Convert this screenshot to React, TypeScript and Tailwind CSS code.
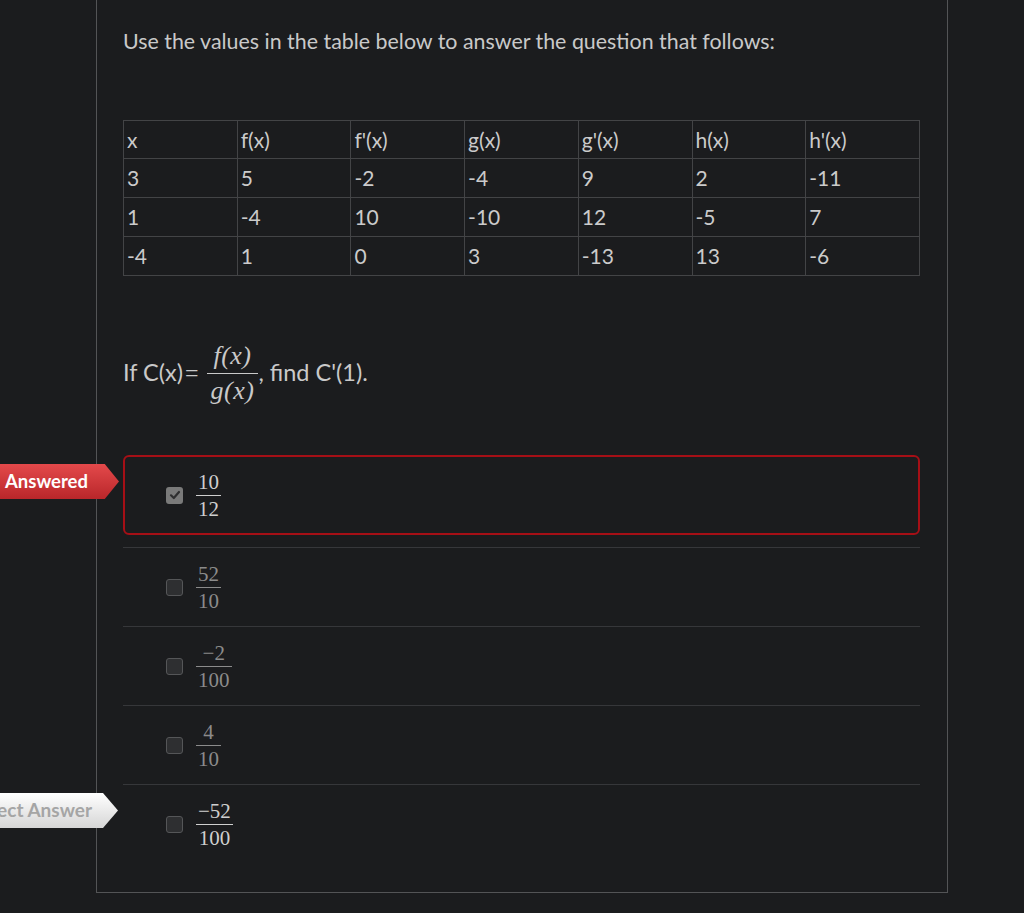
import React from "react"

const headers = ["x", "f(x)", "f'(x)", "g(x)", "g'(x)", "h(x)", "h'(x)"]
const rows = [
  ["3", "5", "-2", "-4", "9", "2", "-11"],
  ["1", "-4", "10", "-10", "12", "-5", "7"],
  ["-4", "1", "0", "3", "-13", "13", "-6"],
]

const options = [
  { num: "10", den: "12", checked: true, light: true },
  { num: "52", den: "10", checked: false, light: false },
  { num: "\u22122", den: "100", checked: false, light: false },
  { num: "4", den: "10", checked: false, light: false },
  { num: "\u221252", den: "100", checked: false, light: true },
]

function Frac({ num, den, className, lh = "leading-[26px] px-[2px]" }: { num: React.ReactNode; den: React.ReactNode; className?: string; lh?: string }) {
  return (
    <span className={"inline-flex flex-col items-center " + (className ?? "")}>
      <span className={lh}>{num}</span>
      <span className="w-full h-px bg-current" />
      <span className={lh}>{den}</span>
    </span>
  )
}

function Checkbox({ checked }: { checked: boolean }) {
  if (checked) {
    return (
      <span className="w-[17px] h-[17px] rounded-[3px] bg-[#7a7a7a] flex items-center justify-center">
        <svg width="12" height="12" viewBox="0 0 12 12">
          <path d="M2 6.3 L4.8 9 L10 3" fill="none" stroke="#2f2f30" strokeWidth="2.2" strokeLinecap="round" strokeLinejoin="round" />
        </svg>
      </span>
    )
  }
  return <span className="w-[17px] h-[17px] rounded-[3px] bg-[#2e2f31] border border-[#555658]" />
}

export default function App() {
  return (
    <div className="w-full h-[913px] relative bg-[#1b1c1e] overflow-hidden font-['Lato','Liberation_Sans',sans-serif] text-[#c9c9c9]">
      <div className="ml-[96px] w-[852px] h-[893px] border-x border-b border-[#535456] pl-[26px] pr-[27px] pt-[26px]">
        <p className="text-[21.4px] leading-[30px]">Use the values in the table below to answer the question that follows:</p>

        <table className="mt-[64px] w-[797px] table-fixed border-collapse text-[21px] text-[#cbcbcb]">
          <tbody>
            <tr className="h-[38px]">
              {headers.map((h) => (
                <td key={h} className="border border-[#434446] px-[3px] align-middle leading-[24px]">{h}</td>
              ))}
            </tr>
            {rows.map((r, i) => (
              <tr key={i} className="h-[39px]">
                {r.map((c, j) => (
                  <td key={j} className="border border-[#434446] px-[3px] align-middle leading-[24px]">{c}</td>
                ))}
              </tr>
            ))}
          </tbody>
        </table>

        <div className="mt-[62px] flex items-center h-[70px] text-[23.5px]">
          <span>If C(x)</span>
          <span className="ml-[2px] font-['Liberation_Serif',serif] text-[24px]">=</span>
          <Frac
            className="ml-[8px] font-['Liberation_Serif',serif] italic text-[26px]"
            lh="leading-[34px] px-[4px] tracking-[0.5px]"
            num={<>f(x)</>}
            den={<>g(x)</>}
          />
          <span>, find C'(1).</span>
        </div>

        <div className="mt-[47px]">
          {options.map((o, i) => (
            <div
              key={i}
              className={
                i === 0
                  ? "relative h-[80px] mb-[12px] rounded-[6px] border-2 border-[#a60f16] flex items-center pl-[41px]"
                  : "relative h-[79px] border-t border-[#36373a] flex items-center pl-[43px]"
              }
            >
              {i === 0 && (
                <div className="absolute left-[-125px] top-[7px] w-[119px] h-[35px] [clip-path:polygon(0_0,88%_0,100%_50%,88%_100%,0_100%)] bg-gradient-to-b from-[#e4494b] to-[#b9262a] flex items-center pl-[5px] text-white text-[18.5px] font-bold">
                  Answered
                </div>
              )}
              {i === 4 && (
                <div className="absolute left-[-155px] top-[8px] w-[150px] h-[35px] [clip-path:polygon(0_0,90%_0,100%_50%,90%_100%,0_100%)] bg-gradient-to-b from-[#ffffff] to-[#d6d6d6] flex items-center justify-end pr-[26px] text-[#a5a5a5] text-[19px] font-bold whitespace-nowrap">
                  Correct Answer
                </div>
              )}
              <Checkbox checked={o.checked} />
              <Frac
                className={
                  "ml-[13px] font-['Liberation_Serif',serif] text-[21px] " +
                  (o.light ? "text-[#cfcfcf]" : "text-[#8b8b8b]")
                }
                num={o.num}
                den={o.den}
              />
            </div>
          ))}
        </div>
      </div>
    </div>
  )
}
